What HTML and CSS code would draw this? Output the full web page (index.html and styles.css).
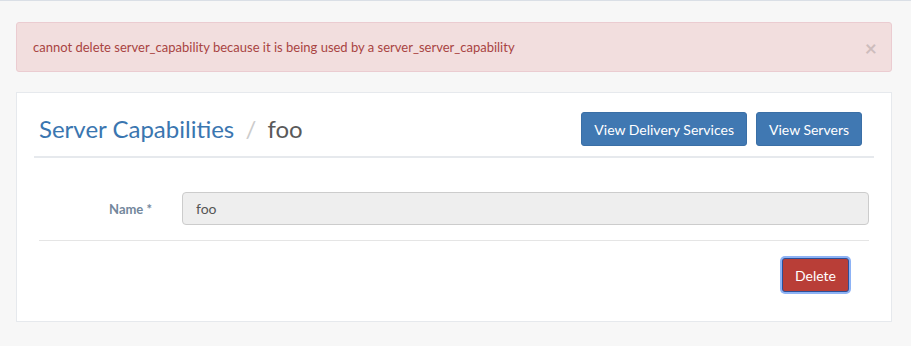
FILE: index.html
```html
<!DOCTYPE html>
<html lang="en">
<head>
    <meta charset="UTF-8">
    <meta name="viewport" content="width=device-width, initial-scale=1.0">
    <title>Server Capabilities - foo</title>
    <link rel="stylesheet" href="styles.css">
</head>
<body>
    <div class="page">
        <!-- error alert -->
        <div class="alert alert-danger">
            <span>cannot delete server_capability because it is being used by a server_server_capability</span>
            <button class="close" type="button">&times;</button>
        </div>

        <div class="x-panel">
            <div class="x-title">
                <h1 class="crumbs">
                    <a href="#">Server Capabilities</a>
                    <span class="sep">/</span>
                    <span class="current">foo</span>
                </h1>
                <div class="actions">
                    <button class="btn btn-primary">View Delivery Services</button>
                    <button class="btn btn-primary">View Servers</button>
                </div>
            </div>

            <div class="x-content">
                <form class="form-horizontal">
                    <div class="form-group">
                        <label for="name">Name *</label>
                        <input type="text" id="name" value="foo" disabled>
                    </div>
                    <div class="divider"></div>
                    <div class="form-actions">
                        <button type="button" class="btn btn-danger">Delete</button>
                    </div>
                </form>
            </div>
        </div>
    </div>
</body>
</html>
```

FILE: styles.css
```css
* { margin: 0; padding: 0; box-sizing: border-box; }
body {
    font-family: Lato, "Open Sans", sans-serif;
    background: #f7f7f7; color: #73879c;
    border-top: 1px solid #dadfe6;
    min-height: 100vh;
}
.page { padding: 21px 19px 0 16px; }

.alert {
    display: flex; align-items: center; justify-content: space-between;
    height: 50px; padding: 0 14px 0 16px;
    background: #f2dede; border: 1px solid #ebccd1; border-radius: 3px;
    color: #a94442; font-size: 13px;
}
.close {
    background: none; border: none; font-family: inherit;
    font-size: 21px; font-weight: bold; line-height: 1;
    color: #000; opacity: 0.15; cursor: pointer;
}

.x-panel {
    margin-top: 20px; background: #fff; border: 1px solid #e6e9ed;
    padding: 10px 17px 29px;
}
.x-title {
    display: flex; justify-content: space-between; align-items: center;
    padding: 9px 12px 10px 5px; border-bottom: 2px solid #e6e9ed;
}
.crumbs { font-size: 24px; font-weight: 400; line-height: 1; }
.crumbs a { color: #3a76b0; text-decoration: none; }
.crumbs .sep { color: #ccc; margin: 0 5px; }
.crumbs .current { color: #5a5a5a; }
.actions { display: flex; gap: 9px; }

.btn {
    font-family: inherit; font-size: 14px; color: #fff;
    height: 34px; padding: 0 12px; border-radius: 3px; cursor: pointer;
}
.btn-primary { background: #4078b2; border: 1px solid #3a6fa6; }
.btn-danger {
    background: #b93e37; border: 1px solid #2c4f98;
    box-shadow: 0 0 0 2px #8db2f5;
}

.x-content { padding: 0 5px; }
.form-group {
    display: grid; grid-template-columns: 143px 1fr;
    margin: 34px 0 0 -15px; align-items: center;
}
.form-group label {
    text-align: right; padding-right: 15px;
    font-size: 13px; font-weight: bold; color: #73879c;
}
.form-group input {
    margin-left: 15px; height: 33px; padding: 0 13px;
    background: #eee; border: 1px solid #ccc; border-radius: 4px;
    font-family: inherit; font-size: 14px; color: #555;
}
.divider { height: 1px; background: #e5e5e5; margin-top: 15px; }
.form-actions { display: flex; justify-content: flex-end; padding: 17px 20px 0 0; }
```
